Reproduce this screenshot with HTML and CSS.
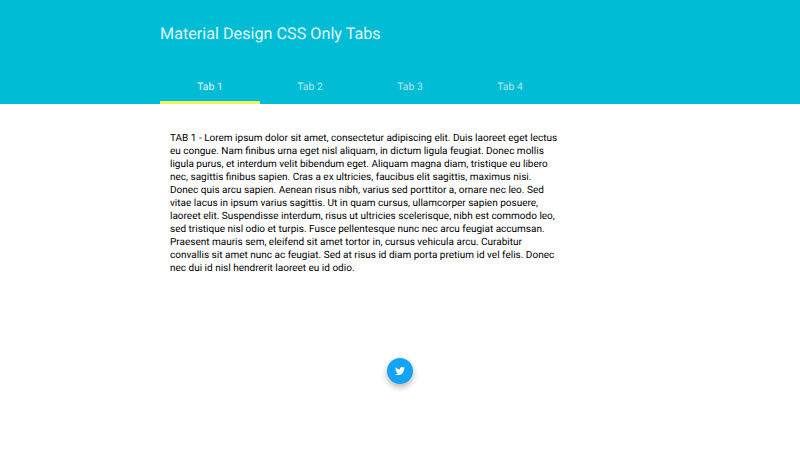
FILE: index.html
```html
<!DOCTYPE html>
<html lang="en">
<head>
    <meta charset="UTF-8">
    <meta name="viewport" content="width=device-width, initial-scale=1.0">
    <title>Material Design CSS Only Tabs</title>
    <link rel="stylesheet" href="styles.css">
</head>
<body>
    <header class="header">
        <h1 class="title">Material Design CSS Only Tabs</h1>
        <nav class="tabs">
            <a class="tab active">Tab 1</a>
            <a class="tab">Tab 2</a>
            <a class="tab">Tab 3</a>
            <a class="tab">Tab 4</a>
        </nav>
    </header>
    <main class="content">
        <p class="text">TAB 1 - Lorem ipsum dolor sit amet, consectetur adipiscing elit. Duis laoreet eget lectus eu congue. Nam finibus urna eget nisl aliquam, in dictum ligula feugiat. Donec mollis ligula purus, et interdum velit bibendum eget. Aliquam magna diam, tristique eu libero nec, sagittis finibus sapien. Cras a ex ultricies, faucibus elit sagittis, maximus nisi. Donec quis arcu sapien. Aenean risus nibh, varius sed porttitor a, ornare nec leo. Sed vitae lacus in ipsum varius sagittis. Ut in quam cursus, ullamcorper sapien posuere, laoreet elit. Suspendisse interdum, risus ut ultricies scelerisque, nibh est commodo leo, sed tristique nisl odio et turpis. Fusce pellentesque nunc nec arcu feugiat accumsan. Praesent mauris sem, eleifend sit amet tortor in, cursus vehicula arcu. Curabitur convallis sit amet nunc ac feugiat. Sed at risus id diam porta pretium id vel felis. Donec nec dui id nisl hendrerit laoreet eu id odio.</p>
        <a class="fab">
            <svg class="fab-icon" viewBox="0 0 24 24"><path d="M23.95 4.57a10 10 0 0 1-2.82.77 4.96 4.96 0 0 0 2.16-2.72c-.95.55-2 .96-3.13 1.19a4.92 4.92 0 0 0-8.38 4.48C7.69 8.1 4.07 6.13 1.64 3.16a4.82 4.82 0 0 0-.67 2.48c0 1.71.87 3.21 2.19 4.1a4.9 4.9 0 0 1-2.23-.62v.06a4.92 4.92 0 0 0 3.95 4.83 5 5 0 0 1-2.21.08 4.94 4.94 0 0 0 4.6 3.42A9.87 9.87 0 0 1 0 19.54a14 14 0 0 0 7.56 2.21c9.05 0 14-7.5 14-13.98 0-.21 0-.42-.02-.63a9.94 9.94 0 0 0 2.46-2.55z"/></svg>
        </a>
    </main>
</body>
</html>
```

FILE: styles.css
```css
body {
    font-family: Roboto, sans-serif;
    text-rendering: geometricPrecision;
    margin: 0;
    padding: 0;
    background-color: #fff;
}
.header {
    height: 104px;
    padding-left: 160px;
    box-sizing: border-box;
    background-color: #00bcd4;
    display: flex;
    flex-direction: column;
    justify-content: space-between;
}
.title {
    margin: 0;
    padding-top: 23px;
    font-size: 16.2px;
    font-weight: 400;
    line-height: 22px;
    color: #e0f7fa;
}
.tabs {
    display: flex;
}
.tab {
    width: 100px;
    height: 36px;
    box-sizing: border-box;
    padding-top: 11px;
    text-align: center;
    font-size: 10.4px;
    line-height: 16px;
    color: #b2ebf2;
}
.active {
    color: #e0f7fa;
    border-bottom: 3px solid #f4f05a;
}
.content {
    height: 346px;
    display: flex;
    flex-direction: column;
    align-items: center;
}
.text {
    align-self: flex-start;
    width: 390px;
    margin: 28px 0 0 170px;
    font-size: 10px;
    line-height: 13px;
    color: #000;
}
.fab {
    width: 26px;
    height: 26px;
    margin-top: 83px;
    border-radius: 50%;
    background-color: #14a4f4;
    box-shadow: 0 3px 6px rgba(0, 0, 0, 0.3);
    display: flex;
    align-items: center;
    justify-content: center;
}
.fab-icon {
    width: 10px;
    height: 10px;
    fill: #fff;
}
```
